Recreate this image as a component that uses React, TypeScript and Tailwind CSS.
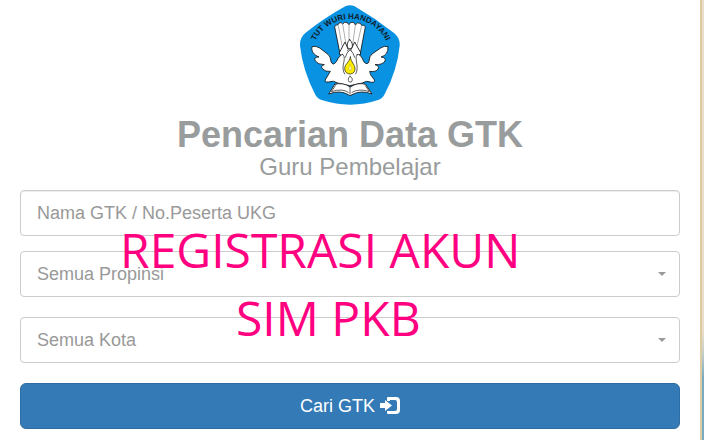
import type { ReactNode } from "react";

function Emblem() {
  return (
    <svg viewBox="15 15 300 300" className="size-[100px]" role="img" aria-label="Tut Wuri Handayani">
      <path
        d="M151 19Q165 12 179 19Q241 55 297 99Q316 114 314 137Q307 211 268 284Q262 296 249 300Q167 328 80 300Q67 296 61 284Q23 211 15 137Q14 113 31 99Q89 53 151 19Z"
        fill="#0992e2"
      />
      <path id="motto" d="M60 125A118 118 0 0 1 274 125" fill="none" />
      <text className="font-['Liberation_Sans',sans-serif] text-[24px] font-bold" fill="#10202c" textAnchor="middle">
        <textPath href="#motto" startOffset="50%">TUT WURI HANDAYANI</textPath>
      </text>
      <g fill="#fff" stroke="#111" strokeWidth="2.5" strokeLinejoin="round" strokeLinecap="round">
        <path d="M119 80Q119 73 128 75L132 69Q139 65 143 72Q149 63 156 68Q160 70 162 74Q165 65 174 67Q180 69 181 75Q187 65 196 70L200 76Q210 73 211 81L195 165L185 187H147L136 165Z" />
        <path d="M130 77L145 157M143 72L152 127M162 74V122M181 75L174 127M200 77L181 158" fill="none" stroke="#888" strokeWidth="2" />
        <path d="M133 158L150 126L160 149L146 177ZM197 158L179 126L168 149L183 177Z" />
        <path d="M164 119Q151 132 160 146H169Q178 132 164 119Z" />
        <path d="M143 165L165 148L187 165L195 210L188 240H142L135 210Z" stroke="none" />
        <path d="M51 140C48 154 57 165 72 171Q54 171 61 183Q69 194 88 194Q75 198 83 207Q91 216 106 214Q99 226 94 234Q84 248 100 246Q116 240 128 249L164 257L202 249Q214 240 229 247Q246 247 234 234Q225 225 224 214Q243 217 249 207Q255 198 240 194Q263 195 270 183Q274 173 258 171Q280 165 279 140Q268 136 257 144L231 162Q223 168 222 184Q218 197 207 186Q195 157 186 164Q181 168 184 183Q190 213 181 225Q173 235 164 235Q154 233 147 224Q140 210 147 184Q150 167 143 163Q134 164 124 185Q114 199 108 185Q107 169 99 163L74 144Q62 136 51 140Z" stroke="none" />
        <path d="M143 163Q134 164 124 185Q114 199 108 185Q107 169 99 163L74 144Q62 136 51 140C48 154 57 165 72 171Q54 171 61 183Q69 194 88 194Q75 198 83 207Q91 216 106 214Q99 226 94 234Q84 248 100 246Q116 240 128 249L164 257L202 249Q214 240 229 247Q246 247 234 234Q225 225 224 214Q243 217 249 207Q255 198 240 194Q263 195 270 183Q274 173 258 171Q280 165 279 140Q268 136 257 144L231 162Q223 168 222 184Q218 197 207 186Q195 157 186 164" fill="none" />
        <path d="M143 163Q150 167 147 184Q140 210 149 222M186 164Q181 168 184 183Q190 210 182 222M165 149Q154 158 151 172M165 149Q176 158 179 172" fill="none" strokeWidth="2" />
        <path d="M166 171C163 188 149 192 149 206C149 217 157 222 166 222C176 221 181 214 180 204C178 191 169 189 166 171Z" fill="#ffed00" strokeWidth="2" />
        <path d="M165 194Q159 205 163 211H169Q173 205 165 194Z" fill="#fff4a0" stroke="#a79b00" strokeWidth="1" />
        <path d="M165 229Q155 237 163 246H169Q177 236 165 229Z" strokeWidth="2" />
        <path d="M119 253L101 282Q136 269 160 284L165 287L171 284Q197 269 231 282L212 253Q188 246 166 261Q143 246 119 253Z" />
        <path d="M121 257L109 275Q143 264 160 277M211 257L223 275Q193 264 171 277M165 261V282" fill="none" strokeWidth="2" />
      </g>
    </svg>
  );
}

function SelectField({ label, children }: { label: string; children: ReactNode }) {
  return (
    <div className="grid items-center">
      <select
        aria-label={label}
        className="col-start-1 row-start-1 h-[46px] w-full appearance-none rounded border border-[#ccc] bg-white px-4 text-lg text-[#999]"
      >
        {children}
      </select>
      <svg viewBox="0 0 8 4" className="pointer-events-none col-start-1 row-start-1 mr-[14px] h-1 w-2 justify-self-end" aria-hidden="true">
        <path d="M0 0H8L4 4Z" fill="#999" />
      </svg>
    </div>
  );
}

function LoginIcon() {
  return (
    <svg viewBox="0 0 20 18" className="h-[18px] w-5" aria-hidden="true">
      <path d="M7 4V1Q7 0 8 0H16Q20 0 20 4V13Q20 17 16 17H8Q7 17 7 16V14H15Q17 14 17 12V5Q17 3 15 3H10V4Z" fill="#fff" />
      <path d="M0 6H5V3L12 8.5L5 14V11H0Z" fill="#fff" />
    </svg>
  );
}

export default function App() {
  return (
    <div className="relative flex min-h-screen bg-white font-['Liberation_Sans',Arial,sans-serif]">
      <main className="flex-1 px-5 pt-[5px] pb-[11px]">
        <header className="flex flex-col items-center text-[#999c9c]">
          <Emblem />
          <h1 className="mt-[11px] text-4xl leading-[38px] font-bold">Pencarian Data GTK</h1>
          <p className="text-2xl leading-[26px]">Guru Pembelajar</p>
        </header>
        <form className="mt-[10px] flex flex-col" onSubmit={(event) => event.preventDefault()}>
          <input
            type="text"
            aria-label="Nama GTK / No.Peserta UKG"
            placeholder="Nama GTK / No.Peserta UKG"
            className="h-[46px] w-full rounded border border-[#ccc] px-4 text-lg shadow-[inset_0_1px_1px_rgba(0,0,0,0.075)] placeholder:text-[#999]"
          />
          <div className="mt-[15px] flex flex-col gap-5">
            <SelectField label="Propinsi">
              <option>Semua Propinsi</option>
            </SelectField>
            <SelectField label="Kota">
              <option>Semua Kota</option>
            </SelectField>
            <button
              type="submit"
              className="flex h-[46px] w-full items-center justify-center gap-[5px] rounded-md border border-[#2e6da4] bg-[#337ab7] text-lg text-white"
            >
              Cari GTK
              <LoginIcon />
            </button>
          </div>
        </form>
      </main>
      <div className="w-1 border-l-2 border-[#dccba3] bg-linear-to-b from-[#e9dfc8] from-75% via-[#c8cfc9] via-80% to-[#79a9bd] to-86%" />
      <div className="pointer-events-none absolute top-[216px] left-[120px] font-['Open_Sans','Noto_Sans',sans-serif] text-5xl leading-[68px] font-medium whitespace-nowrap text-[#ff0080]">
        <p>REGISTRASI AKUN</p>
        <p className="pl-[116px]">SIM PKB</p>
      </div>
    </div>
  );
}
